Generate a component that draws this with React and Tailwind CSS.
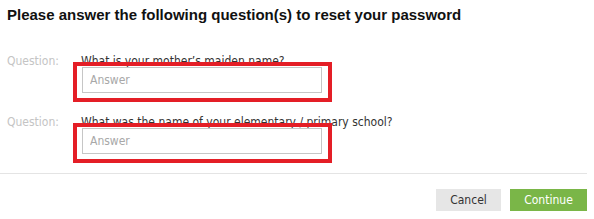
const questions = [
  { id: 'q1', text: 'What is your mother\u2019s maiden name?' },
  { id: 'q2', text: 'What was the name of your elementary / primary school?' },
]

function QuestionRow({ text, last }) {
  return (
    <div className={`flex ${last ? '' : 'mb-[13px]'}`}>
      <div className="w-[81px] shrink-0 pl-[7px] text-[12px] leading-[14px] text-[#c4c4c4]">Question:</div>
      <div className="flex flex-col">
        <div className="text-[12px] leading-[14px] text-[#333333]">{text}</div>
        <div className="-mt-[6px] ml-[-8px] w-[259px] border-[4px] border-[#e41e26] pb-[5px] pl-[5px] pr-[6px] pt-[1px]">
          <input
            type="text"
            placeholder="Answer"
            className="h-[26px] w-[240px] border border-[#c6c6c6] bg-white px-[7px] text-[12px] text-[#333] outline-none placeholder:text-[#a8a8a8]"
          />
        </div>
      </div>
    </div>
  )
}

export default function App() {
  return (
    <div className="h-[219px] w-[594px] bg-white" style={{ fontFamily: '"DejaVu Sans Condensed", "DejaVu Sans", sans-serif' }}>
      <h1 className="px-[7px] pt-[6px] text-[15px] font-bold leading-[18px] text-[#111]" style={{ fontFamily: '"Liberation Sans", Arial, sans-serif' }}>
        Please answer the following question(s) to reset your password
      </h1>
      <div className="mt-[30px]">
        {questions.map((q, i) => (
          <QuestionRow key={q.id} text={q.text} last={i === questions.length - 1} />
        ))}
      </div>
      <div className="mr-[7px] mt-[10px] border-t border-[#e4e4e4]" />
      <div className="mr-[7px] mt-[15px] flex justify-end gap-[9px]">
        <button className="h-[22px] w-[65px] bg-[#e6e6e6] text-[12px] text-[#333]">Cancel</button>
        <button className="h-[22px] w-[77px] bg-[#7ab648] text-[12px] text-white">Continue</button>
      </div>
    </div>
  )
}
